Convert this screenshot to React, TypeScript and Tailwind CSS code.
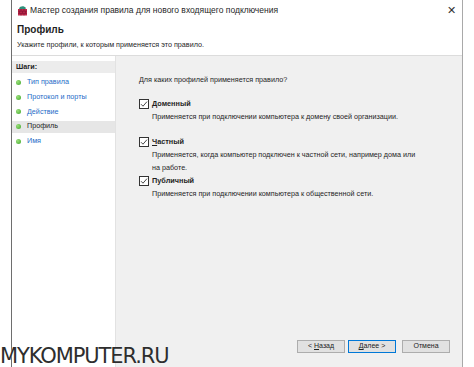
import React from 'react';

const steps = [
  { label: 'Тип правила', active: false },
  { label: 'Протокол и порты', active: false },
  { label: 'Действие', active: false },
  { label: 'Профиль', active: true },
  { label: 'Имя', active: false },
];

const profiles = [
  {
    key: 'domain',
    accel: 'Д',
    rest: 'оменный',
    h: 'h-[38px]',
    desc: ['Применяется при подключении компьютера к домену своей организации.'],
  },
  {
    key: 'private',
    accel: 'Ч',
    rest: 'астный',
    h: 'h-[39px]',
    desc: [
      'Применяется, когда компьютер подключен к частной сети, например дома или',
      'на работе.',
    ],
  },
  {
    key: 'public',
    accel: '',
    rest: 'Публичный',
    h: 'h-[38px]',
    desc: ['Применяется при подключении компьютера к общественной сети.'],
  },
];

const FirewallIcon = () => (
  <svg width="11" height="11" viewBox="0 0 11 11">
    <path d="M2 3.5 C3 1 7 0.5 9 3 L8 4.5 L3 4.5 Z" fill="#2f8f7a" />
    <rect x="1" y="4" width="9" height="6.5" fill="#c0284a" />
    <path d="M1 6.2 H10 M1 8.3 H10 M4 4 V6.2 M7 4 V6.2 M2.5 6.2 V8.3 M5.5 6.2 V8.3 M8.5 6.2 V8.3 M4 8.3 V10.5 M7 8.3 V10.5" stroke="#7a1030" strokeWidth="0.6" />
  </svg>
);

const Check = () => (
  <span className="w-[10px] h-[10px] border border-[#333] bg-white flex items-center justify-center shrink-0">
    <svg width="8" height="8" viewBox="0 0 8 8">
      <path d="M1 4.2 L3 6.2 L7 1.6" fill="none" stroke="#333" strokeWidth="0.9" />
    </svg>
  </span>
);

const StepDot = () => (
  <span className="w-[5px] h-[5px] rounded-full bg-[radial-gradient(circle_at_35%_35%,#9be07a,#3fa62a)] shrink-0" />
);

const Button = ({ children, primary }: { children: React.ReactNode; primary?: boolean }) => (
  <div
    className={`w-[48px] h-[13px] flex items-center justify-center text-[7px] text-[#222] bg-[#e1e1e1] border ${
      primary ? 'border-[#0078d7]' : 'border-[#adadad]'
    }`}
  >
    {children}
  </div>
);

export default function App() {
  return (
    <div
      className="w-[474px] h-[367px] bg-white relative overflow-hidden flex text-[#1f1f1f]"
      style={{ fontFamily: '"Liberation Sans", Arial, sans-serif' }}
    >
      <div className="w-[11px] shrink-0" />
      <div className="w-[452px] h-full flex flex-col border-l border-[#6e6e6e] border-r border-r-[#a9a9a9]">
        {/* Title bar */}
        <div className="h-[20px] flex items-center pl-[5px] pr-[5px]">
          <FirewallIcon />
          <span className="ml-[2px] text-[8.5px] leading-none">
            Мастер создания правила для нового входящего подключения
          </span>
          <span className="ml-auto text-[11px] leading-none text-[#333] mr-[1px]">✕</span>
        </div>

        {/* Header */}
        <div className="h-[36px] pl-[5px] flex flex-col border-b border-[#dcdcdc]">
          <div className="mt-[3px] h-[13px] flex items-center text-[10px] font-bold leading-none">Профиль</div>
          <div className="mt-[3px] h-[11px] flex items-center text-[7.2px] leading-none">
            Укажите профили, к которым применяется это правило.
          </div>
        </div>

        {/* Body */}
        <div className="flex-1 flex">
          <div className="w-[103px] bg-white flex flex-col pt-[5px]">
            <div className="h-[12px] bg-[#ececec] flex items-center pl-[4px] text-[7.2px] font-bold">Шаги:</div>
            <div className="mt-[2px] flex flex-col">
              {steps.map((s) => (
                <div key={s.label} className="h-[14.8px] flex items-center">
                  <div
                    className={`w-full h-[12px] flex items-center pl-[4px] gap-[6px] ${
                      s.active ? 'bg-[#e6e6e6]' : ''
                    }`}
                  >
                    <StepDot />
                    <span className={`text-[7.2px] ${s.active ? 'text-[#1f1f1f]' : 'text-[#1e6cc8]'}`}>{s.label}</span>
                  </div>
                </div>
              ))}
            </div>
          </div>

          <div className="flex-1 bg-[#f0f0f0] border-l border-[#e2e2e2] flex flex-col pl-[23px] pr-[12px]">
            <div className="mt-[18px] h-[12px] flex items-center text-[7.2px]">
              Для каких профилей применяется правило?
            </div>
            <div className="mt-[12px] flex flex-col">
              {profiles.map((p) => (
                <div key={p.key} className={`flex flex-col ${p.h}`}>
                  <div className="h-[12px] flex items-center gap-[3px]">
                    <Check />
                    <span className="text-[7.3px] font-bold">
                      {p.accel && <span className="underline">{p.accel}</span>}
                      {p.rest}
                    </span>
                  </div>
                  <div className="mt-[1px] pl-[13px] flex flex-col">
                    {p.desc.map((d) => (
                      <div key={d} className="h-[13px] flex items-center text-[7.2px]">
                        {d}
                      </div>
                    ))}
                  </div>
                </div>
              ))}
            </div>

            <div className="mt-auto mb-[14px] flex justify-end">
              <Button>
                &lt; <span className="underline ml-[2px]">Н</span>азад
              </Button>
              <div className="w-[3px]" />
              <Button primary>
                <span className="underline">Д</span>алее &gt;
              </Button>
              <div className="w-[6px]" />
              <Button>Отмена</Button>
            </div>
          </div>
        </div>
      </div>

      {/* Watermark */}
      <div
        className="absolute left-0 bottom-0 text-[21px] leading-none text-[#2e2e2e] tracking-[-1.1px]"
        style={{ fontFamily: '"DejaVu Sans", sans-serif', textShadow: '0 0 1px #fff' }}
      >
        MYKOMPUTER.RU
      </div>
    </div>
  );
}
